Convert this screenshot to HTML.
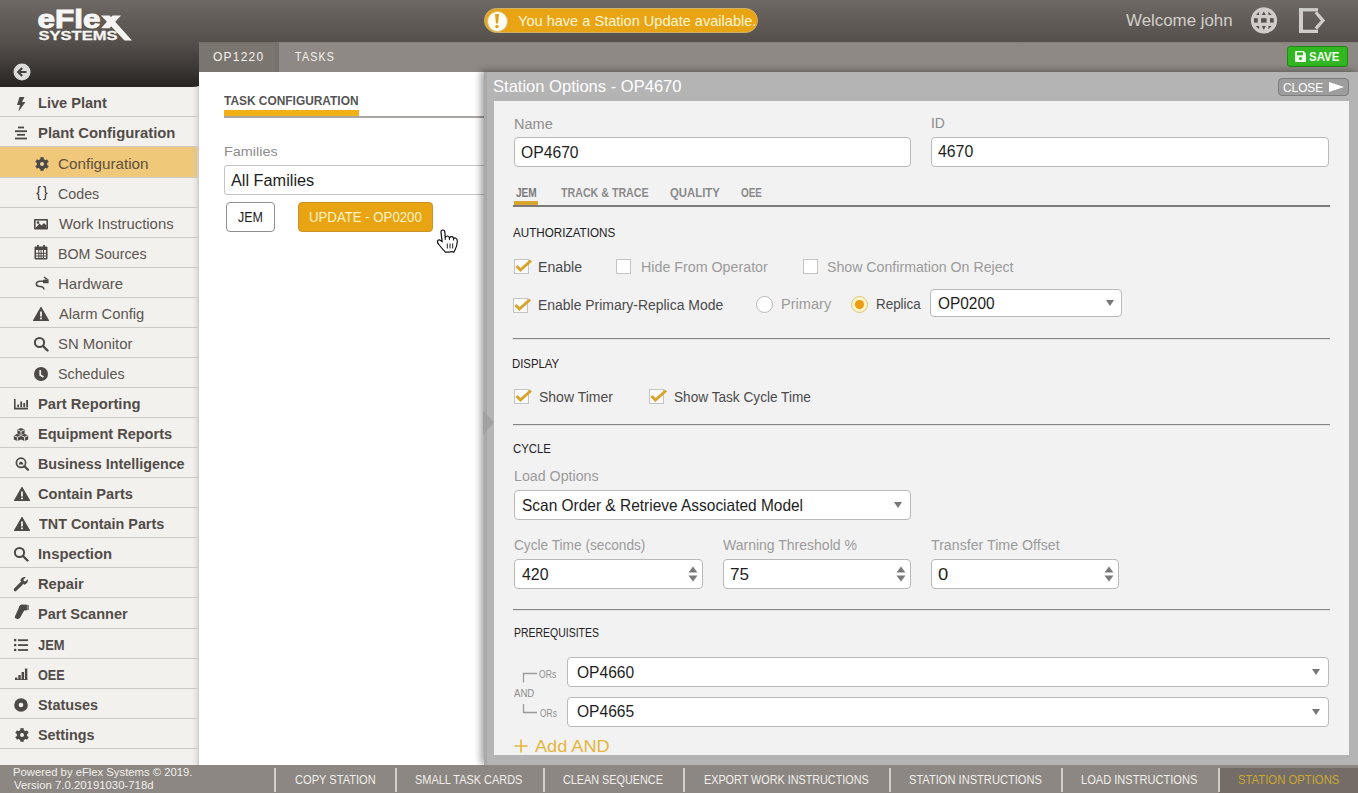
<!DOCTYPE html>
<html><head><meta charset="utf-8">
<style>
*{box-sizing:border-box;margin:0;padding:0}
html,body{width:1358px;height:793px;overflow:hidden;background:#fff;font-family:"Liberation Sans",sans-serif}
.abs{position:absolute}
.ic{position:absolute}
.tx{position:absolute;white-space:pre;line-height:normal;font-family:"Liberation Sans",sans-serif}
#hdr{position:absolute;left:0;top:0;width:1358px;height:87px;background:linear-gradient(#6e6964 0px,#615c57 20px,#55504c 42px,#3f3b38 65px,#262321 87px)}
#sidebg{position:absolute;left:0;top:87px;width:199px;height:678px;background:#f3f1ee}
#sideedge{position:absolute;left:192px;top:86px;width:7px;height:679px;background:linear-gradient(90deg,rgba(200,195,190,0),rgba(200,195,190,.35) 70%,#d6d2ce 85%,#cdc9c5)}
.row{position:absolute;left:0;width:199px;border-bottom:1px solid #cdc9c5}
#tabbar{position:absolute;left:199px;top:42px;width:1159px;height:30px;background:linear-gradient(#86817c 0px,#8e8984 2px,#8e8984 30px)}
#tab1{position:absolute;left:199px;top:42px;width:80px;height:30px;background:linear-gradient(#736e68 0px,#7b756f 2px,#7b756f 30px);border-right:4px solid #77716b}
#content{position:absolute;left:199px;top:72px;width:1159px;height:693px;background:#fff}
#notif{position:absolute;left:484px;top:8px;width:274px;height:25px;border-radius:13px;background:#e8a412;border:1px solid #cfb16c}
#nicon{position:absolute;left:2px;top:1.5px;width:21px;height:21px;border-radius:50%;background:#fffdf4;border:1px solid #d8c27e}
#save{position:absolute;left:1287px;top:46px;width:61px;height:21px;background:#31b722;border:1px solid #23871a;border-radius:3px}
#fam{position:absolute;left:224px;top:165px;width:270px;height:30px;border:1px solid #c4c4c4;border-radius:3px;background:#fff}
#jembtn{position:absolute;left:226px;top:202px;width:49px;height:30px;border:1px solid #8f8f8f;border-radius:4px;background:#fff}
#updbtn{position:absolute;left:298px;top:202px;width:135px;height:30px;border-radius:4px;background:#e8a412;border:1px solid #c9932a}
#panel{position:absolute;left:484px;top:72px;width:874px;height:693px;background:#b4b4b4;box-shadow:-3px -1px 7px rgba(0,0,0,.38)}
#inner{position:absolute;left:494px;top:101px;width:855px;height:654px;background:#f2f2f2}
#close{position:absolute;left:1278px;top:78px;width:71px;height:18px;border:1px solid #7c7c7c;border-radius:4px;background:#9d9d9d}
.inp{position:absolute;background:#fff;border:1px solid #b9b9b9;border-radius:4px}
.hr{position:absolute;left:513px;width:817px;height:1px;background:#858585;box-shadow:0 0.5px 0.5px rgba(0,0,0,.12)}
.cb{position:absolute;width:15px;height:15px;border:1px solid #c4c4c4;background:#fbfbfb}
.radio{position:absolute;width:17px;height:17px;border-radius:50%;border:1px solid #b8b8b8;background:#fff}
.caret{position:absolute;width:0;height:0;border-left:4.5px solid transparent;border-right:4.5px solid transparent;border-top:6.5px solid #777;margin:1px 0 0 0.5px}
#footer{position:absolute;left:0;top:765px;width:1358px;height:28px;background:#8c8782}
.sep{position:absolute;top:768px;width:2px;height:24px;background:#d2cec9}
</style></head><body>
<div id="hdr"></div>
<svg class="ic" style="left:30px;top:0px" width="110" height="50" viewBox="0 0 110 50"><g fill="#f6f5f3" stroke="#f6f5f3"><text x="7.5" y="28.3" font-size="26.5" font-weight="bold" font-family="Liberation Sans" stroke-width="1" textLength="63" lengthAdjust="spacingAndGlyphs">eFle</text><path stroke="none" d="M71 15.4 L79.5 15.4 L102 40.5 L94.5 40.5 Z"/><path stroke="none" d="M82.5 15.4 L91 15.4 L79.5 28.3 L71 28.3 Z"/><text x="8.5" y="39.8" font-size="12.8" font-weight="bold" font-family="Liberation Sans" stroke-width="0.3" textLength="79" lengthAdjust="spacingAndGlyphs">SYSTEMS</text></g></svg>
<div id="notif"><div id="nicon"></div></div>
<svg class="ic" style="left:494px;top:13px" width="6" height="16" viewBox="0 0 6 16"><path d="M1 1 H5 L4 10.5 H2 Z" fill="#e0a21c"/><circle cx="3" cy="13.5" r="1.7" fill="#e0a21c"/></svg>
<svg class="ic" style="left:1245px;top:3px" width="40" height="35" viewBox="0 0 40 35"><circle cx="19" cy="17.4" r="13.1" fill="#cfccc9"/><g fill="#57524e"><rect x="9" y="15.2" width="3.8" height="4.4"/><rect x="16.1" y="15.2" width="5.5" height="4.4"/><rect x="25" y="15.2" width="3.7" height="4.4"/><path d="M18.8 8.4 L16.8 12 L20.8 12 Z M11 12 L14.1 12 L14.1 8.8 Z M23.4 8.8 L23.4 12 L26.6 12 Z M16.8 23 L20.8 23 L18.8 26.9 Z M10.8 23 L14.1 23 L14.1 26.3 Z M23.4 23 L26.7 23 L23.4 26.3 Z"/></g></svg>
<svg class="ic" style="left:1290px;top:3px" width="45" height="35" viewBox="0 0 45 35"><g fill="#cfccc9"><rect x="9" y="5.1" width="19" height="3.3"/><rect x="9" y="26.7" width="19" height="3.3"/><rect x="9" y="5.1" width="4" height="24.9"/></g><path d="M25.8 9.3 L33 17.6 L25.8 25.6" fill="none" stroke="#cfccc9" stroke-width="3.2"/></svg>
<div id="tabbar"></div>
<div id="tab1"></div>
<div id="save"></div>
<svg class="ic" style="left:1295px;top:51px" width="11" height="11" viewBox="0 0 11 11"><path d="M0 1 Q0 0 1 0 H8.5 L11 2.5 V10 Q11 11 10 11 H1 Q0 11 0 10 Z" fill="#f2fff0"/><rect x="2" y="1.3" width="6" height="3" fill="#31b722"/><circle cx="5.5" cy="7.5" r="1.5" fill="#31b722"/></svg>
<div id="sidebg"></div>
<div class="row" style="top:87px;height:30px;"></div>
<svg class="ic" style="left:13px;top:95.5px" width="16" height="16" viewBox="0 0 16 16"><path d="M6.5 1 L11.5 1 L9 6 L12.5 6 L5.5 15.5 L7 9 L4 9 Z" fill="#4d4945"/></svg>
<div class="row" style="top:117px;height:30px;"></div>
<svg class="ic" style="left:13px;top:125px" width="16" height="16" viewBox="0 0 16 16"><g stroke="#4d4945" stroke-width="1.8"><line x1="5" y1="2.5" x2="11" y2="2.5"/><line x1="2" y1="6.2" x2="14" y2="6.2"/><line x1="4" y1="9.8" x2="12" y2="9.8"/><line x1="2" y1="13.5" x2="14" y2="13.5"/></g></svg>
<div class="row" style="top:147px;height:31px;background:#efc879;"></div>
<svg class="ic" style="left:34px;top:156px" width="16" height="16" viewBox="0 0 16 16"><g fill="#4d4945"><circle cx="8" cy="8" r="5.2"/><g stroke="#4d4945" stroke-width="3.4"><line x1="8" y1="1.2" x2="8" y2="14.8"/><line x1="2.1" y1="4.6" x2="13.9" y2="11.4"/><line x1="2.1" y1="11.4" x2="13.9" y2="4.6"/></g></g><circle cx="8" cy="8" r="2" fill="#e6d7a8"/></svg>
<div class="row" style="top:178px;height:30px;"></div>
<svg class="ic" style="left:34.5px;top:183.5px" width="16" height="16" viewBox="0 0 16 16"><text x="8" y="12.5" font-size="14" text-anchor="middle" fill="#333" font-family="Liberation Sans" letter-spacing="2">{}</text></svg>
<div class="row" style="top:208px;height:30px;"></div>
<svg class="ic" style="left:33px;top:215.5px" width="16" height="16" viewBox="0 0 16 16"><rect x="1" y="3" width="14" height="10.5" rx="1" fill="#4d4945"/><rect x="2.6" y="4.6" width="10.8" height="7.3" fill="#f3f1ee"/><path d="M2.6 11.9 L6.5 7.5 L8.5 9.5 L11 7 L13.4 9.5 L13.4 11.9 Z" fill="#4d4945"/><circle cx="5" cy="6.6" r="1.3" fill="#4d4945"/></svg>
<div class="row" style="top:238px;height:30px;"></div>
<svg class="ic" style="left:33px;top:244px" width="16" height="16" viewBox="0 0 16 16"><rect x="1.5" y="2.5" width="13" height="13" rx="1" fill="#4d4945"/><rect x="3" y="6" width="10" height="8" fill="#f3f1ee"/><g fill="#4d4945"><rect x="3" y="8.8" width="10" height="1"/><rect x="3" y="11.5" width="10" height="1"/><rect x="5.3" y="6" width="1" height="8"/><rect x="7.6" y="6" width="1" height="8"/><rect x="10" y="6" width="1" height="8"/></g><rect x="4" y="1" width="1.8" height="3" fill="#4d4945"/><rect x="10.2" y="1" width="1.8" height="3" fill="#4d4945"/></svg>
<div class="row" style="top:268px;height:30px;"></div>
<svg class="ic" style="left:33.5px;top:274.5px" width="16" height="16" viewBox="0 0 16 16"><path d="M9.5 6.3 L6.2 6.3 Q2.4 6.4 2.4 9 Q2.4 11.5 6 11.5 Q9.9 11.6 9.9 14.5" fill="none" stroke="#4d4945" stroke-width="1.6"/><path d="M9 4.8 L14.6 4.6 L14.6 8.2 L9 8.2 Z" fill="#4d4945"/><path d="M9.6 2.2 L10.4 1.4 L14.6 4.6 L12 4.8 Z" fill="#4d4945"/></svg>
<div class="row" style="top:298px;height:30px;"></div>
<svg class="ic" style="left:33px;top:306px" width="16" height="16" viewBox="0 0 16 16"><path d="M8 1.5 L15.5 14.5 L0.5 14.5 Z" fill="#4d4945" stroke="#4d4945" stroke-linejoin="round" stroke-width="1.2"/><rect x="7.1" y="5.5" width="1.8" height="5" fill="#f3f1ee"/><rect x="7.1" y="11.5" width="1.8" height="1.8" fill="#f3f1ee"/></svg>
<div class="row" style="top:328px;height:30px;"></div>
<svg class="ic" style="left:32.5px;top:336px" width="16" height="16" viewBox="0 0 16 16"><circle cx="6.5" cy="6.5" r="4.6" fill="none" stroke="#4d4945" stroke-width="2"/><line x1="10" y1="10" x2="14.5" y2="14.5" stroke="#4d4945" stroke-width="2.4" stroke-linecap="round"/></svg>
<div class="row" style="top:358px;height:30px;"></div>
<svg class="ic" style="left:33px;top:366px" width="16" height="16" viewBox="0 0 16 16"><circle cx="8" cy="8" r="7" fill="#4d4945"/><path d="M7.2 4 L7.2 9 L10.5 11" fill="none" stroke="#f3f1ee" stroke-width="1.7"/></svg>
<div class="row" style="top:388px;height:30px;"></div>
<svg class="ic" style="left:12.5px;top:395px" width="16" height="16" viewBox="0 0 16 16"><path d="M1.8 4 L1.8 13.6 L15 13.6" fill="none" stroke="#4d4945" stroke-width="1.6"/><g fill="#4d4945"><rect x="4.3" y="9.5" width="1.8" height="2.8"/><rect x="7.3" y="6.5" width="1.8" height="5.8"/><rect x="10.3" y="8" width="1.8" height="4.3"/><rect x="13.2" y="5" width="1.8" height="7.3"/></g></svg>
<div class="row" style="top:418px;height:30px;"></div>
<svg class="ic" style="left:13px;top:426px" width="16" height="16" viewBox="0 0 16 16"><g fill="#4d4945"><path d="M8 2 L11.6 3.6 L11.6 7.6 L8 9.2 L4.4 7.6 L4.4 3.6 Z"/><path d="M4.4 7.8 L8 9.4 L8 13.4 L4.4 15 L0.8 13.4 L0.8 9.4 Z"/><path d="M11.6 7.8 L15.2 9.4 L15.2 13.4 L11.6 15 L8 13.4 L8 9.4 Z"/></g><g fill="none" stroke="#f3f1ee" stroke-width="0.9"><path d="M4.6 3.8 L8 5.4 L11.4 3.8 M8 5.4 V9"/><path d="M1 9.6 L4.4 11.2 L7.8 9.6 M4.4 11.2 V14.8"/><path d="M8.2 9.6 L11.6 11.2 L15 9.6 M11.6 11.2 V14.8"/></g></svg>
<div class="row" style="top:448px;height:30px;"></div>
<svg class="ic" style="left:13.5px;top:455.5px" width="16" height="16" viewBox="0 0 16 16"><circle cx="7" cy="6.8" r="4.6" fill="none" stroke="#4d4945" stroke-width="1.7"/><line x1="10.4" y1="10.2" x2="14" y2="13.8" stroke="#4d4945" stroke-width="2.3" stroke-linecap="round"/><path d="M4.6 8.6 Q5 6 7 5.6 Q9.2 6 9.4 8.6 Z" fill="#4d4945"/></svg>
<div class="row" style="top:478px;height:30px;"></div>
<svg class="ic" style="left:13.5px;top:486px" width="16" height="16" viewBox="0 0 16 16"><path d="M8 1.5 L15.5 14.5 L0.5 14.5 Z" fill="#4d4945" stroke="#4d4945" stroke-linejoin="round" stroke-width="1.2"/><rect x="7.1" y="5.5" width="1.8" height="5" fill="#f3f1ee"/><rect x="7.1" y="11.5" width="1.8" height="1.8" fill="#f3f1ee"/></svg>
<div class="row" style="top:508px;height:30px;"></div>
<svg class="ic" style="left:13.5px;top:516px" width="16" height="16" viewBox="0 0 16 16"><path d="M8 1.5 L15.5 14.5 L0.5 14.5 Z" fill="#4d4945" stroke="#4d4945" stroke-linejoin="round" stroke-width="1.2"/><rect x="7.1" y="5.5" width="1.8" height="5" fill="#f3f1ee"/><rect x="7.1" y="11.5" width="1.8" height="1.8" fill="#f3f1ee"/></svg>
<div class="row" style="top:538px;height:30px;"></div>
<svg class="ic" style="left:12.5px;top:545.5px" width="16" height="16" viewBox="0 0 16 16"><circle cx="6.5" cy="6.5" r="4.6" fill="none" stroke="#4d4945" stroke-width="2"/><line x1="10" y1="10" x2="14.5" y2="14.5" stroke="#4d4945" stroke-width="2.4" stroke-linecap="round"/></svg>
<div class="row" style="top:568px;height:30px;"></div>
<svg class="ic" style="left:13px;top:575.5px" width="16" height="16" viewBox="0 0 16 16"><path d="M2.3 13.7 L8.5 7.5" stroke="#4d4945" stroke-width="3.2" stroke-linecap="round"/><path d="M7.3 4.8 A4.3 4.3 0 0 1 12.8 1.3 L10.4 3.7 L10.9 5.1 L12.3 5.6 L14.7 3.2 A4.3 4.3 0 0 1 11.2 8.7 Z" fill="#4d4945"/></svg>
<div class="row" style="top:598px;height:31px;"></div>
<svg class="ic" style="left:13px;top:603.5px" width="16" height="16" viewBox="0 0 16 16"><path d="M6.2 2.2 Q7 0.6 9 0.6 L14.6 0.8 L14.6 6.2 L11.2 6.4 L7.2 13.6 Q6.3 15.4 4.2 15 L2.8 14.5 Q1.2 13.8 2 12.2 L5.6 4.2 Z" fill="#4d4945"/><rect x="15.3" y="1" width="0.9" height="5" fill="#4d4945"/></svg>
<div class="row" style="top:629px;height:30px;"></div>
<svg class="ic" style="left:13px;top:637px" width="16" height="16" viewBox="0 0 16 16"><g fill="#4d4945"><rect x="1" y="2" width="2.3" height="2.3"/><rect x="1" y="6.9" width="2.3" height="2.3"/><rect x="1" y="11.8" width="2.3" height="2.3"/><rect x="5" y="2.3" width="10" height="1.8"/><rect x="5" y="7.2" width="10" height="1.8"/><rect x="5" y="12.1" width="10" height="1.8"/></g></svg>
<div class="row" style="top:659px;height:30px;"></div>
<svg class="ic" style="left:13px;top:665.5px" width="16" height="16" viewBox="0 0 16 16"><g fill="#4d4945"><rect x="2" y="11.5" width="2.4" height="2.5"/><rect x="5.3" y="9" width="2.4" height="5"/><rect x="8.6" y="6" width="2.4" height="8"/><rect x="11.9" y="2.5" width="2.4" height="11.5"/><rect x="2" y="13.2" width="12.3" height="0.8"/></g></svg>
<div class="row" style="top:689px;height:30px;"></div>
<svg class="ic" style="left:13px;top:697px" width="16" height="16" viewBox="0 0 16 16"><circle cx="8" cy="8" r="6.8" fill="#4d4945"/><circle cx="8" cy="8" r="2.3" fill="#f3f1ee"/></svg>
<div class="row" style="top:719px;height:30px;"></div>
<svg class="ic" style="left:13.5px;top:726.5px" width="16" height="16" viewBox="0 0 16 16"><g fill="#4d4945"><circle cx="8" cy="8" r="5.2"/><g stroke="#4d4945" stroke-width="3.4"><line x1="8" y1="1.2" x2="8" y2="14.8"/><line x1="2.1" y1="4.6" x2="13.9" y2="11.4"/><line x1="2.1" y1="11.4" x2="13.9" y2="4.6"/></g></g><circle cx="8" cy="8" r="2" fill="#f3f1ee"/></svg>
<div id="sideedge"></div>
<svg class="ic" style="left:13px;top:63px" width="18" height="18" viewBox="0 0 18 18"><circle cx="9" cy="9" r="8.5" fill="#dedcda"/><path d="M13.5 9 H5.5 M9.2 5 L5.2 9 L9.2 13" fill="none" stroke="#46423f" stroke-width="2.2"/></svg>
<div id="content"></div>
<div class="abs" style="left:224px;top:116px;width:262px;height:2px;background:#a9a6a3"></div>
<div class="abs" style="left:224px;top:110px;width:135px;height:6px;background:#f1b117"></div>
<div id="fam"></div>
<div id="jembtn"></div>
<div id="updbtn"></div>
<svg class="ic" style="left:436px;top:229px" width="24" height="25" viewBox="0 0 24 25"><path d="M6.8 1 Q8.8 1 8.9 3.5 L9.2 8.4 Q10 6.8 11.6 7 Q13 7.2 13.4 8.8 Q14.4 7.4 16 7.6 Q17.4 7.9 17.6 9.6 Q18.6 8.6 19.9 9.2 Q21.4 10 21.3 12.5 Q21 17 19.2 20.5 L17.8 23.2 Q15.5 22.2 13 23.2 L9.4 23.2 Q6 19.5 2.8 15.5 Q1 13.6 1.6 12 Q2.6 10.2 4.6 11.4 L6.2 12.8 L5 3.5 Q4.8 1 6.8 1 Z" fill="#fff" stroke="#111" stroke-width="1.2" stroke-linejoin="round"/><path d="M11.3 14.5 V19.5 M14 14.5 V19.5 M16.7 14.5 V19.5" stroke="#222" stroke-width="1"/><path d="M9.2 8.4 V11 M13.4 8.8 V11 M17.6 9.6 V11.5" stroke="#111" stroke-width="1"/></svg>
<div id="panel"></div>
<div class="abs" style="left:484px;top:72px;width:3px;height:693px;background:#a9a9a9"></div>
<svg class="ic" style="left:483px;top:410px" width="11" height="25" viewBox="0 0 11 25"><path d="M0 0 L11 12.5 L0 25 Z" fill="#a2a2a2"/></svg>
<div id="close"></div>
<svg class="ic" style="left:1329px;top:82px" width="15" height="10" viewBox="0 0 15 10"><path d="M0 0 L15 5 L0 10 Z" fill="#fff"/></svg>
<div id="inner"></div>
<div class="inp" style="left:514px;top:137px;width:397px;height:30px"></div>
<div class="inp" style="left:931px;top:137px;width:398px;height:30px"></div>
<div class="abs" style="left:513px;top:205px;width:817px;height:2px;background:#7b7b7b"></div>
<div class="abs" style="left:514px;top:201px;width:24px;height:4px;background:#d9a52e"></div>
<!--CHECKS-->
<div class="cb" style="left:514px;top:259px"></div>
<div class="cb" style="left:616px;top:259px;background:#fff"></div>
<div class="cb" style="left:803px;top:259px;background:#fff"></div>
<div class="cb" style="left:513px;top:298px"></div>
<div class="cb" style="left:514px;top:389px"></div>
<div class="cb" style="left:649px;top:389px"></div>
<svg class="ic" style="left:514px;top:258px" width="20" height="16" viewBox="0 0 20 16"><path d="M2.5 8 L6.5 12 L17 2.5" fill="none" stroke="#d8a42a" stroke-width="3"/></svg>
<svg class="ic" style="left:513px;top:297px" width="20" height="16" viewBox="0 0 20 16"><path d="M2.5 8 L6.5 12 L17 2.5" fill="none" stroke="#d8a42a" stroke-width="3"/></svg>
<svg class="ic" style="left:514px;top:388px" width="20" height="16" viewBox="0 0 20 16"><path d="M2.5 8 L6.5 12 L17 2.5" fill="none" stroke="#d8a42a" stroke-width="3"/></svg>
<svg class="ic" style="left:649px;top:388px" width="20" height="16" viewBox="0 0 20 16"><path d="M2.5 8 L6.5 12 L17 2.5" fill="none" stroke="#d8a42a" stroke-width="3"/></svg>
<div class="radio" style="left:756px;top:296px"></div>
<div class="radio" style="left:851px;top:296px;background:#fbf3c8;border-color:#d9c77c"></div>
<div class="abs" style="left:855px;top:300px;width:9px;height:9px;border-radius:50%;background:#ec9b12"></div>
<div class="inp" style="left:930px;top:289px;width:192px;height:28px"></div><div class="caret" style="left:1105px;top:299px"></div>
<div class="hr" style="top:338px"></div>
<div class="hr" style="top:424px"></div>
<div class="inp" style="left:514px;top:490px;width:397px;height:30px"></div><div class="caret" style="left:893px;top:501px"></div>
<div class="inp" style="left:514px;top:559px;width:189px;height:30px"></div>
<div class="inp" style="left:723px;top:559px;width:188px;height:30px"></div>
<div class="inp" style="left:931px;top:559px;width:188px;height:30px"></div>
<svg class="ic" style="left:688px;top:566px" width="10" height="16" viewBox="0 0 10 16"><path d="M0.5 6.5 L5 0.5 L9.5 6.5 Z M0.5 9.5 L5 15.5 L9.5 9.5 Z" fill="#7a7a7a"/></svg>
<svg class="ic" style="left:896px;top:566px" width="10" height="16" viewBox="0 0 10 16"><path d="M0.5 6.5 L5 0.5 L9.5 6.5 Z M0.5 9.5 L5 15.5 L9.5 9.5 Z" fill="#7a7a7a"/></svg>
<svg class="ic" style="left:1104px;top:566px" width="10" height="16" viewBox="0 0 10 16"><path d="M0.5 6.5 L5 0.5 L9.5 6.5 Z M0.5 9.5 L5 15.5 L9.5 9.5 Z" fill="#7a7a7a"/></svg>
<div class="hr" style="top:609px"></div>
<div class="inp" style="left:567px;top:657px;width:762px;height:30px"></div><div class="caret" style="left:1311px;top:668px"></div>
<div class="inp" style="left:567px;top:697px;width:762px;height:30px"></div><div class="caret" style="left:1311px;top:708px"></div>
<svg class="ic" style="left:520px;top:670px" width="20" height="46" viewBox="0 0 20 46"><path d="M3.5 12.5 V3.5 H17 M3.5 34 V42.5 H17" fill="none" stroke="#9a9a9a" stroke-width="1.3"/></svg>
<svg class="ic" style="left:514px;top:739px" width="14" height="14" viewBox="0 0 14 14"><path d="M7 0.5 V13.5 M0.5 7 H13.5" stroke="#e6b53c" stroke-width="1.6"/></svg>
<div id="footer"></div>
<div class="abs" style="left:1219px;top:768px;width:139px;height:25px;background:#746d67"></div>
<div class="sep" style="left:274px"></div>
<div class="sep" style="left:395px"></div>
<div class="sep" style="left:543px"></div>
<div class="sep" style="left:683px"></div>
<div class="sep" style="left:889px"></div>
<div class="sep" style="left:1061px"></div>
<div class="sep" style="left:1218px"></div>
<div class="tx" style="left:38.06px;top:95px;font-size:14px;font-weight:bold;color:#514c48;transform:scaleX(1.0415);transform-origin:0 0;">Live Plant</div>
<div class="tx" style="left:38.04px;top:125px;font-size:14px;font-weight:bold;color:#514c48;transform:scaleX(1.0578);transform-origin:0 0;">Plant Configuration</div>
<div class="tx" style="left:58.34px;top:156px;font-size:14.4px;font-weight:normal;color:#5e5140;transform:scaleX(1.0571);transform-origin:0 0;">Configuration</div>
<div class="tx" style="left:57.61px;top:186px;font-size:14.4px;font-weight:normal;color:#5a5550;transform:scaleX(0.9900);transform-origin:0 0;">Codes</div>
<div class="tx" style="left:58.60px;top:216px;font-size:14.4px;font-weight:normal;color:#5a5550;transform:scaleX(1.0333);transform-origin:0 0;">Work Instructions</div>
<div class="tx" style="left:57.61px;top:246px;font-size:14.4px;font-weight:normal;color:#5a5550;transform:scaleX(0.9898);transform-origin:0 0;">BOM Sources</div>
<div class="tx" style="left:57.56px;top:276px;font-size:14.4px;font-weight:normal;color:#5a5550;transform:scaleX(1.0443);transform-origin:0 0;">Hardware</div>
<div class="tx" style="left:58.60px;top:306px;font-size:14.4px;font-weight:normal;color:#5a5550;transform:scaleX(1.0244);transform-origin:0 0;">Alarm Config</div>
<div class="tx" style="left:57.56px;top:336px;font-size:14.4px;font-weight:normal;color:#5a5550;transform:scaleX(1.0352);transform-origin:0 0;">SN Monitor</div>
<div class="tx" style="left:57.61px;top:366px;font-size:14.4px;font-weight:normal;color:#5a5550;transform:scaleX(0.9909);transform-origin:0 0;">Schedules</div>
<div class="tx" style="left:38.05px;top:396px;font-size:14px;font-weight:bold;color:#514c48;transform:scaleX(1.0542);transform-origin:0 0;">Part Reporting</div>
<div class="tx" style="left:38.06px;top:426px;font-size:14px;font-weight:bold;color:#514c48;transform:scaleX(1.0383);transform-origin:0 0;">Equipment Reports</div>
<div class="tx" style="left:38.08px;top:456px;font-size:14px;font-weight:bold;color:#514c48;transform:scaleX(1.0239);transform-origin:0 0;">Business Intelligence</div>
<div class="tx" style="left:38.06px;top:486px;font-size:14px;font-weight:bold;color:#514c48;transform:scaleX(1.0422);transform-origin:0 0;">Contain Parts</div>
<div class="tx" style="left:39.10px;top:516px;font-size:14px;font-weight:bold;color:#514c48;transform:scaleX(1.0254);transform-origin:0 0;">TNT Contain Parts</div>
<div class="tx" style="left:38.04px;top:546px;font-size:14px;font-weight:bold;color:#514c48;transform:scaleX(1.0574);transform-origin:0 0;">Inspection</div>
<div class="tx" style="left:38.05px;top:576px;font-size:14px;font-weight:bold;color:#514c48;transform:scaleX(1.0500);transform-origin:0 0;">Repair</div>
<div class="tx" style="left:38.06px;top:606px;font-size:14px;font-weight:bold;color:#514c48;transform:scaleX(1.0388);transform-origin:0 0;">Part Scanner</div>
<div class="tx" style="left:37.50px;top:637px;font-size:14px;font-weight:bold;color:#514c48;transform:scaleX(0.9214);transform-origin:0 0;">JEM</div>
<div class="tx" style="left:38.20px;top:667px;font-size:14px;font-weight:bold;color:#514c48;transform:scaleX(0.9036);transform-origin:0 0;">OEE</div>
<div class="tx" style="left:38.07px;top:697px;font-size:14px;font-weight:bold;color:#514c48;transform:scaleX(1.0281);transform-origin:0 0;">Statuses</div>
<div class="tx" style="left:38.08px;top:727px;font-size:14px;font-weight:bold;color:#514c48;transform:scaleX(1.0222);transform-origin:0 0;">Settings</div>
<div class="tx" style="left:1125.70px;top:10px;font-size:17.4px;font-weight:normal;color:#d2cfcc;transform:scaleX(0.9706);transform-origin:0 0;">Welcome john</div>
<div class="tx" style="left:517.70px;top:13px;font-size:14.5px;font-weight:normal;color:#fff6d6;transform:scaleX(1.0047);transform-origin:0 0;">You have a Station Update available.</div>
<div class="tx" style="left:213.42px;top:50px;font-size:12.3px;font-weight:normal;color:#f4f2f0;letter-spacing:1.23px;transform:scaleX(0.9795);transform-origin:0 0;">OP1220</div>
<div class="tx" style="left:294.50px;top:50px;font-size:12.3px;font-weight:normal;color:#f4f2f0;letter-spacing:1.38px;transform:scaleX(0.8667);transform-origin:0 0;">TASKS</div>
<div class="tx" style="left:1308.80px;top:49px;font-size:12.8px;font-weight:bold;color:#f4fff0;transform:scaleX(0.8969);transform-origin:0 0;">SAVE</div>
<div class="tx" style="left:224.00px;top:93px;font-size:12.8px;font-weight:bold;color:#555;transform:scaleX(0.9306);transform-origin:0 0;">TASK CONFIGURATION</div>
<div class="tx" style="left:223.64px;top:144px;font-size:13.6px;font-weight:normal;color:#8d8d8d;transform:scaleX(1.0612);transform-origin:0 0;">Families</div>
<div class="tx" style="left:231.40px;top:172px;font-size:16px;font-weight:normal;color:#1e1e1e;transform:scaleX(1.0173);transform-origin:0 0;">All Families</div>
<div class="tx" style="left:237.90px;top:209px;font-size:14px;font-weight:normal;color:#1e1e1e;transform:scaleX(0.8889);transform-origin:0 0;">JEM</div>
<div class="tx" style="left:308.99px;top:209px;font-size:14.5px;font-weight:normal;color:#fff3c4;transform:scaleX(0.9107);transform-origin:0 0;">UPDATE - OP0200</div>
<div class="tx" style="left:493.43px;top:77px;font-size:17px;font-weight:normal;color:#ffffff;transform:scaleX(0.9729);transform-origin:0 0;">Station Options - OP4670</div>
<div class="tx" style="left:1283.22px;top:80px;font-size:13.4px;font-weight:normal;color:#ffffff;transform:scaleX(0.8841);transform-origin:0 0;">CLOSE</div>
<div class="tx" style="left:513.85px;top:117px;font-size:13.8px;font-weight:normal;color:#8d8d8d;transform:scaleX(1.0514);transform-origin:0 0;">Name</div>
<div class="tx" style="left:520.74px;top:143px;font-size:16.4px;font-weight:normal;color:#1e1e1e;transform:scaleX(0.9576);transform-origin:0 0;">OP4670</div>
<div class="tx" style="left:930.89px;top:116px;font-size:13.8px;font-weight:normal;color:#8d8d8d;transform:scaleX(1.0083);transform-origin:0 0;">ID</div>
<div class="tx" style="left:938.40px;top:142px;font-size:16.4px;font-weight:normal;color:#1e1e1e;transform:scaleX(0.9667);transform-origin:0 0;">4670</div>
<div class="tx" style="left:516.10px;top:186px;font-size:12.3px;font-weight:bold;color:#7a7a7a;transform:scaleX(0.8200);transform-origin:0 0;">JEM</div>
<div class="tx" style="left:561.00px;top:186px;font-size:12.3px;font-weight:bold;color:#8a8a8a;transform:scaleX(0.8663);transform-origin:0 0;">TRACK &amp; TRACE</div>
<div class="tx" style="left:669.60px;top:186px;font-size:12.3px;font-weight:bold;color:#8a8a8a;transform:scaleX(0.9222);transform-origin:0 0;">QUALITY</div>
<div class="tx" style="left:741.00px;top:186px;font-size:12.3px;font-weight:bold;color:#8a8a8a;transform:scaleX(0.8077);transform-origin:0 0;">OEE</div>
<div class="tx" style="left:513.20px;top:226px;font-size:12px;font-weight:normal;color:#222;transform:scaleX(0.9724);transform-origin:0 0;">AUTHORIZATIONS</div>
<div class="tx" style="left:538.28px;top:260px;font-size:13.8px;font-weight:normal;color:#4a4a4a;transform:scaleX(1.0244);transform-origin:0 0;">Enable</div>
<div class="tx" style="left:640.67px;top:260px;font-size:13.8px;font-weight:normal;color:#9b9b9b;transform:scaleX(1.0336);transform-origin:0 0;">Hide From Operator</div>
<div class="tx" style="left:827.37px;top:260px;font-size:13.8px;font-weight:normal;color:#9b9b9b;transform:scaleX(1.0265);transform-origin:0 0;">Show Confirmation On Reject</div>
<div class="tx" style="left:538.29px;top:298px;font-size:13.8px;font-weight:normal;color:#4a4a4a;transform:scaleX(1.0104);transform-origin:0 0;">Enable Primary-Replica Mode</div>
<div class="tx" style="left:781.34px;top:297px;font-size:13.8px;font-weight:normal;color:#9b9b9b;transform:scaleX(1.0565);transform-origin:0 0;">Primary</div>
<div class="tx" style="left:875.53px;top:297px;font-size:13.8px;font-weight:normal;color:#4a4a4a;transform:scaleX(0.9711);transform-origin:0 0;">Replica</div>
<div class="tx" style="left:937.57px;top:294px;font-size:16.5px;font-weight:normal;color:#1e1e1e;transform:scaleX(0.9339);transform-origin:0 0;">OP0200</div>
<div class="tx" style="left:512.25px;top:357px;font-size:12px;font-weight:normal;color:#222;transform:scaleX(0.9479);transform-origin:0 0;">DISPLAY</div>
<div class="tx" style="left:538.89px;top:390px;font-size:13.8px;font-weight:normal;color:#4a4a4a;transform:scaleX(1.0139);transform-origin:0 0;">Show Timer</div>
<div class="tx" style="left:673.71px;top:390px;font-size:13.8px;font-weight:normal;color:#4a4a4a;transform:scaleX(0.9883);transform-origin:0 0;">Show Task Cycle Time</div>
<div class="tx" style="left:513.05px;top:442px;font-size:12px;font-weight:normal;color:#222;transform:scaleX(0.9487);transform-origin:0 0;">CYCLE</div>
<div class="tx" style="left:513.67px;top:469px;font-size:13.8px;font-weight:normal;color:#9b9b9b;transform:scaleX(1.0309);transform-origin:0 0;">Load Options</div>
<div class="tx" style="left:521.76px;top:496px;font-size:16.5px;font-weight:normal;color:#1e1e1e;transform:scaleX(0.9372);transform-origin:0 0;">Scan Order &amp; Retrieve Associated Model</div>
<div class="tx" style="left:513.71px;top:538px;font-size:13.8px;font-weight:normal;color:#9b9b9b;transform:scaleX(0.9908);transform-origin:0 0;">Cycle Time (seconds)</div>
<div class="tx" style="left:723.00px;top:538px;font-size:13.8px;font-weight:normal;color:#9b9b9b;transform:scaleX(1.0152);transform-origin:0 0;">Warning Threshold %</div>
<div class="tx" style="left:931.00px;top:538px;font-size:13.8px;font-weight:normal;color:#9b9b9b;transform:scaleX(1.0288);transform-origin:0 0;">Transfer Time Offset</div>
<div class="tx" style="left:522.10px;top:565px;font-size:16.4px;font-weight:normal;color:#1e1e1e;transform:scaleX(0.9704);transform-origin:0 0;">420</div>
<div class="tx" style="left:729.66px;top:565px;font-size:16.4px;font-weight:normal;color:#1e1e1e;transform:scaleX(1.0412);transform-origin:0 0;">75</div>
<div class="tx" style="left:937.88px;top:565px;font-size:16.4px;font-weight:normal;color:#1e1e1e;transform:scaleX(1.1250);transform-origin:0 0;">0</div>
<div class="tx" style="left:513.65px;top:626px;font-size:12.3px;font-weight:normal;color:#222;transform:scaleX(0.8510);transform-origin:0 0;">PREREQUISITES</div>
<div class="tx" style="left:576.85px;top:663px;font-size:16.4px;font-weight:normal;color:#1e1e1e;transform:scaleX(0.9508);transform-origin:0 0;">OP4660</div>
<div class="tx" style="left:576.85px;top:702px;font-size:16.4px;font-weight:normal;color:#1e1e1e;transform:scaleX(0.9508);transform-origin:0 0;">OP4665</div>
<div class="tx" style="left:539.40px;top:669px;font-size:10px;font-weight:normal;color:#8f8f8f;transform:scaleX(0.8600);transform-origin:0 0;">ORs</div>
<div class="tx" style="left:514.10px;top:688px;font-size:10px;font-weight:normal;color:#8f8f8f;transform:scaleX(0.9619);transform-origin:0 0;">AND</div>
<div class="tx" style="left:539.70px;top:708px;font-size:10px;font-weight:normal;color:#8f8f8f;transform:scaleX(0.8450);transform-origin:0 0;">ORs</div>
<div class="tx" style="left:535.20px;top:737px;font-size:16.5px;font-weight:normal;color:#e6b53c;transform:scaleX(1.0985);transform-origin:0 0;">Add AND</div>
<div class="tx" style="left:13.42px;top:766px;font-size:11.5px;font-weight:normal;color:#f1efec;transform:scaleX(0.9801);transform-origin:0 0;">Powered by eFlex Systems &copy; 2019.</div>
<div class="tx" style="left:14.40px;top:779px;font-size:11.5px;font-weight:normal;color:#f1efec;transform:scaleX(0.9872);transform-origin:0 0;">Version 7.0.20191030-718d</div>
<div class="tx" style="left:294.93px;top:773px;font-size:12.7px;font-weight:normal;color:#f1efec;transform:scaleX(0.8736);transform-origin:0 0;">COPY STATION</div>
<div class="tx" style="left:415.44px;top:773px;font-size:12.7px;font-weight:normal;color:#f1efec;transform:scaleX(0.8618);transform-origin:0 0;">SMALL TASK CARDS</div>
<div class="tx" style="left:563.35px;top:773px;font-size:12.7px;font-weight:normal;color:#f1efec;transform:scaleX(0.8534);transform-origin:0 0;">CLEAN SEQUENCE</div>
<div class="tx" style="left:703.85px;top:773px;font-size:12.7px;font-weight:normal;color:#f1efec;transform:scaleX(0.8516);transform-origin:0 0;">EXPORT WORK INSTRUCTIONS</div>
<div class="tx" style="left:908.82px;top:773px;font-size:12.7px;font-weight:normal;color:#f1efec;transform:scaleX(0.8753);transform-origin:0 0;">STATION INSTRUCTIONS</div>
<div class="tx" style="left:1081.13px;top:773px;font-size:12.7px;font-weight:normal;color:#f1efec;transform:scaleX(0.8727);transform-origin:0 0;">LOAD INSTRUCTIONS</div>
<div class="tx" style="left:1238.11px;top:773px;font-size:12.7px;font-weight:normal;color:#c9a633;transform:scaleX(0.8911);transform-origin:0 0;">STATION OPTIONS</div>
</body></html>
